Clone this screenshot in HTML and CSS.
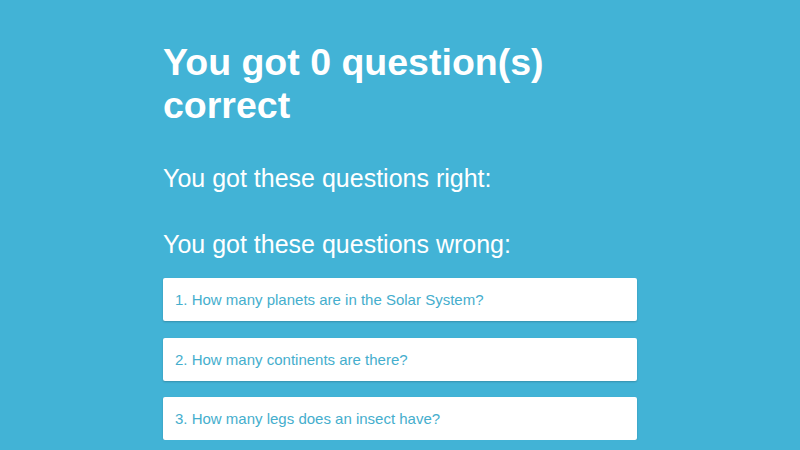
FILE: index.html
```html
<!DOCTYPE html>
<html>
<head>
<meta charset="utf-8">
<link rel="stylesheet" href="styles.css">
</head>
<body>
<main class="results">
  <h1 class="score">You got 0 question(s) correct</h1>
  <h2 class="section-title">You got these questions right:</h2>
  <ul class="question-list"></ul>
  <h2 class="section-title">You got these questions wrong:</h2>
  <ul class="question-list">
    <li class="question-card">1. How many planets are in the Solar System?</li>
    <li class="question-card">2. How many continents are there?</li>
    <li class="question-card">3. How many legs does an insect have?</li>
  </ul>
</main>
</body>
</html>
```
FILE: styles.css
```css
html, body {
  margin: 0;
  padding: 0;
  background: #42b3d6;
  font-family: "Liberation Sans", Arial, sans-serif;
  font-size: 15px;
  color: #ffffff;
}
.results {
  width: 474px;
  margin: 0 auto;
  padding-top: 41px;
}
.score {
  margin: 0;
  font-size: 37.5px;
  font-weight: bold;
  line-height: normal;
}
.section-title {
  margin: 37px 0 0;
  font-size: 25px;
  font-weight: normal;
  line-height: normal;
}
.question-list {
  list-style: none;
  margin: 0;
  padding: 0;
  display: flex;
  flex-direction: column;
  gap: 16.5px;
}
.section-title + .question-list:not(:empty) {
  margin-top: 19px;
}
.question-card {
  background: #ffffff;
  color: #45aecd;
  font-size: 15px;
  height: 43px;
  line-height: 43px;
  padding: 0 12px;
  border-radius: 2px;
  box-shadow: 0 1px 2px rgba(0,0,0,0.2);
}
```
